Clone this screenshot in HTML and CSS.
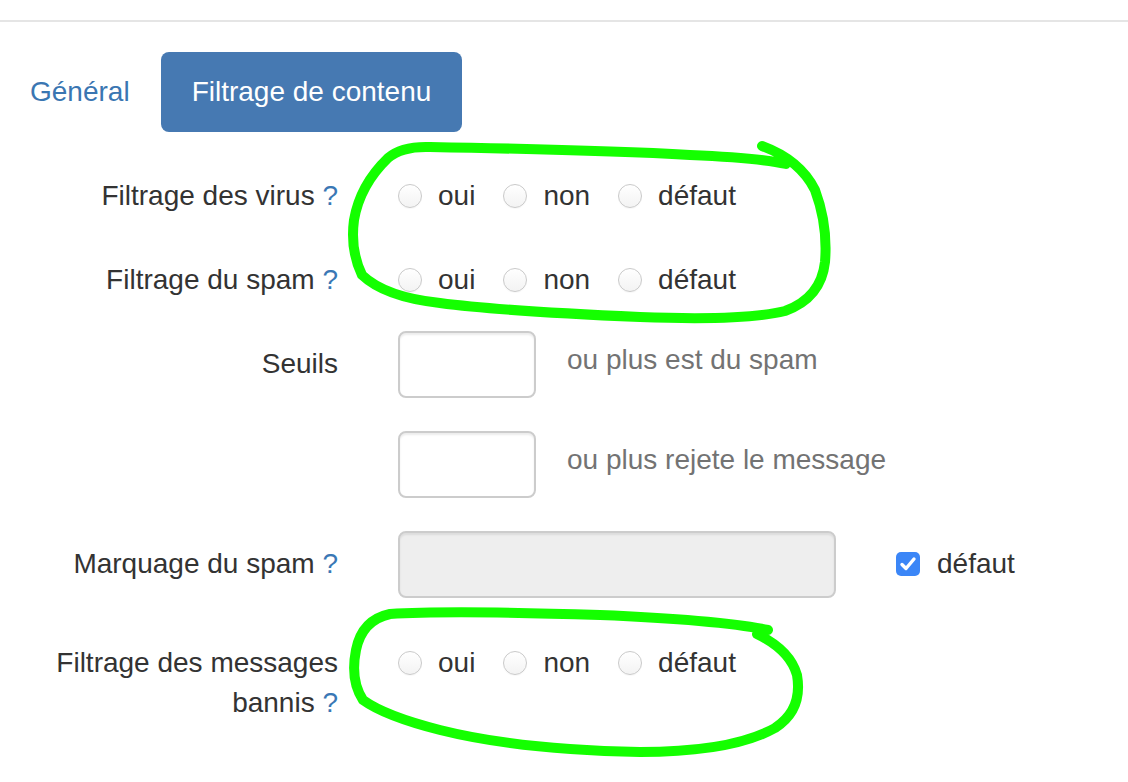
FILE: index.html
```html
<!DOCTYPE html>
<html lang="fr">
<head>
<meta charset="utf-8">
<title>Filtrage de contenu</title>
<link rel="stylesheet" href="styles.css">
</head>
<body>
<div class="topbar"></div>
<ul class="tabs">
  <li><a class="tab" href="#">Général</a></li>
  <li><a class="tab active" href="#">Filtrage de contenu</a></li>
</ul>
<form class="form">
  <div class="row">
    <label class="label">Filtrage des virus <a class="help" href="#">?</a></label>
    <div class="controls radios">
      <label class="opt"><input type="radio" name="virus" class="radio">oui</label>
      <label class="opt"><input type="radio" name="virus" class="radio">non</label>
      <label class="opt"><input type="radio" name="virus" class="radio">défaut</label>
    </div>
  </div>
  <div class="row">
    <label class="label">Filtrage du spam <a class="help" href="#">?</a></label>
    <div class="controls radios">
      <label class="opt"><input type="radio" name="spam" class="radio">oui</label>
      <label class="opt"><input type="radio" name="spam" class="radio">non</label>
      <label class="opt"><input type="radio" name="spam" class="radio">défaut</label>
    </div>
  </div>
  <div class="row">
    <label class="label">Seuils</label>
    <div class="controls inline">
      <input type="text" class="field small">
      <span class="hint">ou plus est du spam</span>
    </div>
  </div>
  <div class="row">
    <label class="label"></label>
    <div class="controls inline">
      <input type="text" class="field small">
      <span class="hint">ou plus rejete le message</span>
    </div>
  </div>
  <div class="row row-mark">
    <label class="label">Marquage du spam <a class="help" href="#">?</a></label>
    <div class="controls inline">
      <input type="text" class="field wide" disabled>
      <label class="check"><span class="box"><svg viewBox="0 0 24 24" width="24" height="24"><path d="M6 12.5 L10 16.5 L18 7" fill="none" stroke="#fff" stroke-width="3.4" stroke-linecap="round" stroke-linejoin="round"/></svg></span>défaut</label>
    </div>
  </div>
  <div class="row">
    <label class="label"><span>Filtrage des messages</span><br><span>bannis</span> <a class="help" href="#">?</a></label>
    <div class="controls radios">
      <label class="opt"><input type="radio" name="banned" class="radio">oui</label>
      <label class="opt"><input type="radio" name="banned" class="radio">non</label>
      <label class="opt"><input type="radio" name="banned" class="radio">défaut</label>
    </div>
  </div>
</form>
<svg class="marks" width="1128" height="782" viewBox="0 0 1128 782">
  <path d="M 762,146 Q 800,160 815,190 Q 828,225 825,262 Q 821,298 785,311 Q 745,321 640,317 Q 500,311 440,303 Q 385,297 362,275 Q 350,250 354,220 Q 360,185 388,158 Q 402,146 430,147 Q 600,150 690,155 Q 760,158 786,164" />
  <path d="M 757,634 Q 790,650 797,675 Q 803,710 775,728 Q 732,752 640,752 Q 520,750 440,730 Q 385,716 363,700 Q 350,680 356,650 Q 362,620 390,614 Q 450,610 600,615 Q 720,620 768,630" />
</svg>
</body>
</html>
```

FILE: styles.css
```css
* { box-sizing: border-box; }

body {
  margin: 0;
  position: relative;
  width: 1128px;
  min-height: 782px;
  background: #fff;
  color: #333;
  font-family: "Liberation Sans", Arial, sans-serif;
  font-size: 28px;
  line-height: 40px;
}

.topbar {
  height: 22px;
  border-bottom: 2px solid #e5e5e5;
}

.tabs {
  list-style: none;
  margin: 30px 0 30px 0;
  padding: 0;
  display: flex;
  gap: 1px;
}

.tab {
  display: block;
  padding: 20px 30px;
  border-radius: 8px;
  color: #3a76b2;
  text-decoration: none;
}

.tab.active {
  background: #4679b2;
  color: #fff;
  padding: 20px 31px 20px 31px;
}

.form { margin: 0; }

.row {
  display: flex;
  margin-bottom: 30px;
}

.row-mark { margin-bottom: 31px; }

.label {
  width: 368px;
  flex: none;
  padding: 14px 30px 0 30px;
  text-align: right;
}

.help {
  color: #3a78b5;
  text-decoration: none;
}

.controls {
  padding-left: 30px;
}

.radios {
  display: flex;
  align-items: flex-start;
  gap: 28px;
  padding-top: 14px;
}

.opt {
  display: flex;
  align-items: center;
}

.radio {
  appearance: none;
  -webkit-appearance: none;
  width: 24px;
  height: 24px;
  margin: 0 16px 0 0;
  border-radius: 50%;
  border: 1px solid #cacaca;
  background: linear-gradient(#ffffff, #f3f3f3);
  box-shadow: 0 1px 1px rgba(0, 0, 0, 0.03);
}

.inline {
  display: flex;
  align-items: flex-start;
}

.field {
  height: 67px;
  margin: 1px 0 0 0;
  border: 2px solid #cccccc;
  border-radius: 8px;
  box-shadow: inset 0 2px 2px rgba(0, 0, 0, 0.075);
  background: #fff;
  font: inherit;
  padding: 0 24px;
}

.field.small { width: 138px; }

.field.wide {
  width: 438px;
  background: #eeeeee;
}

.hint {
  color: #737373;
  margin-left: 31px;
  padding: 10px 0 20px 0;
}

.check {
  display: flex;
  align-items: center;
  margin-left: 60px;
  padding-top: 14px;
}

.box {
  width: 24px;
  height: 24px;
  border-radius: 5px;
  background: #3b86f7;
  margin-right: 17px;
  display: flex;
}

.marks {
  position: absolute;
  left: 0;
  top: 0;
  pointer-events: none;
}

.marks path {
  fill: none;
  stroke: #14ff00;
  stroke-width: 10;
  stroke-linecap: round;
  stroke-linejoin: round;
}
```
